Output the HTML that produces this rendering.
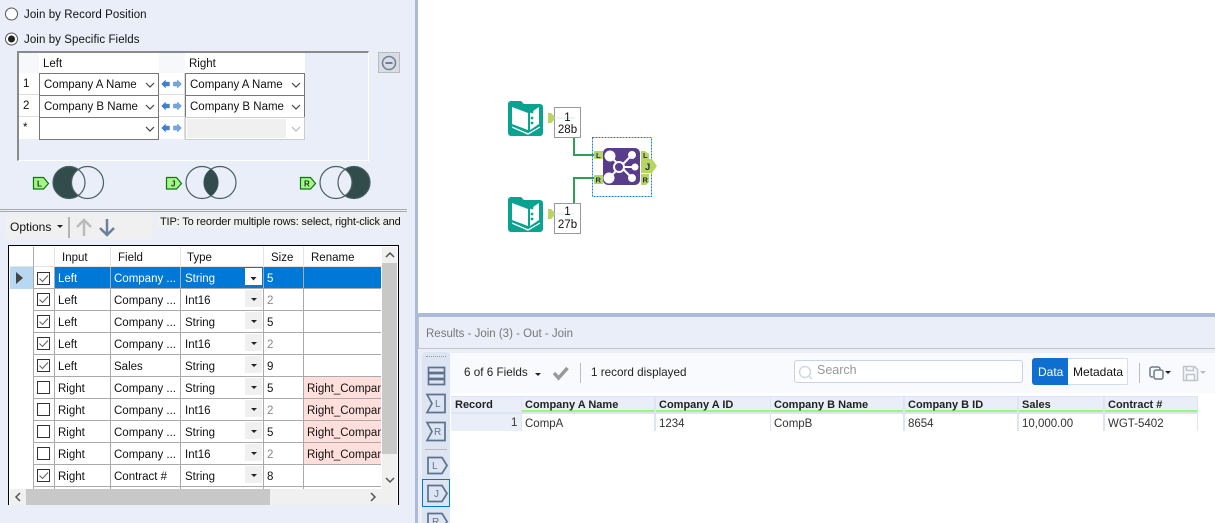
<!DOCTYPE html>
<html><head><meta charset="utf-8"><style>
html,body{margin:0;padding:0;width:1215px;height:523px;overflow:hidden;background:#fff}
body{position:relative;font-family:"Liberation Sans",sans-serif;font-size:11.5px;color:#111}
div,span,svg{position:absolute;box-sizing:border-box}
.t{white-space:nowrap;line-height:14px;margin-top:1px}
.dd{background:#fff;border:1px solid #777;height:23px;width:120px}
.dd .t{left:4px;top:3px}
.g{background:#aaa}
.w{background:#e4e4e4}
.cb{left:37px;width:13px;height:13px;background:#fff;border:1px solid #333}
.ty{left:245px;width:17px;height:17px;background:#f0f0f0}
.ty:after{content:"";position:absolute;left:6px;top:8px;border:3px solid transparent;border-top:3.5px solid #222;border-bottom:0}
.pk{left:304px;width:77px;height:21px;background:#ffdfdc}
.h{top:397px;height:15px;background:#e9eef8;border-bottom:2px solid #9cf57f}
.h .t{left:3px;top:0;font-weight:bold;font-size:11px;color:#222}
.c{top:414px;height:17px;background:#fff}
.c .t{left:3px;top:2px;color:#333;font-size:11.5px}
</style></head><body>

<div style="left:0;top:0;width:415px;height:523px;background:#e9eef8"></div>
<div style="left:415px;top:0;width:3px;height:523px;background:#adbbdb"></div>

<svg style="left:5px;top:7px" width="14" height="40"><circle cx="6.500" cy="7" r="6" fill="#fff" stroke="#555"/><circle cx="6.500" cy="32" r="6" fill="#fff" stroke="#555"/><circle cx="6.500" cy="32" r="3.500" fill="#222"/></svg>
<div class="t" style="left:24px;top:7px;letter-spacing:.08px">Join by Record Position</div>
<div class="t" style="left:24px;top:32px;letter-spacing:.08px">Join by Specific Fields</div>

<div style="left:17px;top:51px;width:352px;height:110px;background:#e9eef8;border:1px solid #fff;border-top:2px solid #8a8a8a;border-left:2px solid #8a8a8a"></div>
<div style="left:19px;top:53px;width:286px;height:86px;background:#fff"></div>
<div style="left:19px;top:53px;width:20px;height:20px;background:#f6f8fc"></div>
<div style="left:159px;top:53px;width:26px;height:20px;background:#f6f8fc"></div>
<div style="left:19px;top:94px;width:21px;height:1px;background:#ddd"></div>
<div style="left:19px;top:116px;width:21px;height:1px;background:#ddd"></div>
<div style="left:158px;top:94px;width:27px;height:1px;background:#ddd"></div>
<div style="left:158px;top:116px;width:27px;height:1px;background:#ddd"></div>
<div style="left:184px;top:73px;width:1px;height:66px;background:#ddd"></div>
<div class="t" style="left:43px;top:56px">Left</div>
<div class="t" style="left:189px;top:56px">Right</div>
<div class="t" style="left:23px;top:76px">1</div>
<div class="t" style="left:23px;top:98px">2</div>
<div class="t" style="left:23px;top:120px">*</div>

<div class="dd" style="left:39px;top:73px"><span class="t">Company A Name</span></div>
<div class="dd" style="left:39px;top:95px"><span class="t">Company B Name</span></div>
<div class="dd" style="left:39px;top:117px"></div>
<div class="dd" style="left:185px;top:73px"><span class="t">Company A Name</span></div>
<div class="dd" style="left:185px;top:95px"><span class="t">Company B Name</span></div>
<div class="dd" style="left:185px;top:117px;border-color:#ccc"></div>
<div style="left:187px;top:119px;width:99px;height:19px;background:#f0f0f0"></div>

<svg style="left:0;top:0" width="320" height="140" fill="none" stroke-width="1.200">
<g stroke="#444"><path d="M146 83l4 4 4-4M146 105l4 4 4-4M146 127l4 4 4-4"/><path d="M292 83l4 4 4-4M292 105l4 4 4-4"/></g>
<path d="M292 127l4 4 4-4" stroke="#bbb"/>
<g fill="#3f7fcc" stroke="#5b8fc9" stroke-width=".5">
<path d="M161.500 84l4-4v2h4v4h-4v2zM161.500 106l4-4v2h4v4h-4v2zM161.500 128l4-4v2h4v4h-4v2z"/></g>
<g fill="#78a6e0" stroke="#5b8fc9" stroke-width=".5">
<path d="M181.500 84l-4-4v2h-4v4h4v2zM181.500 106l-4-4v2h-4v4h4v2zM181.500 128l-4-4v2h-4v4h4v2z"/>
</g></svg>

<div style="left:378px;top:52px;width:22px;height:21px;background:#d9dce3;border:1px solid #bbb"></div>
<svg style="left:381px;top:55px" width="16" height="16"><circle cx="8" cy="8" r="6.500" fill="none" stroke="#6b7f9e" stroke-width="1.500"/><path d="M4.500 8h7" stroke="#6b7f9e" stroke-width="2"/></svg>

<svg style="left:30px;top:164px" width="350" height="38">
<path d="M3.500 13.500h10l5 6-5 5.500h-10z" fill="#a6f58a" stroke="#0a7a0a" stroke-width="1.200"/><text x="7" y="22.500" font-size="8" font-weight="bold" font-family="Liberation Sans" fill="#0b3b0b">L</text>
<path d="M136.500 13.500h10l5 6-5 5.500h-10z" fill="#a6f58a" stroke="#0a7a0a" stroke-width="1.200"/><text x="141" y="22.500" font-size="8" font-weight="bold" font-family="Liberation Sans" fill="#0b3b0b">J</text>
<path d="M270.500 13.500h10l5 6-5 5.500h-10z" fill="#a6f58a" stroke="#0a7a0a" stroke-width="1.200"/><text x="274" y="22.500" font-size="8" font-weight="bold" font-family="Liberation Sans" fill="#0b3b0b">R</text>
<circle cx="39" cy="18.500" r="16" fill="#324c4c"/><circle cx="57.500" cy="18.500" r="16" fill="#e9eef8" stroke="#4a6060" stroke-width="1.200"/><circle cx="39" cy="18.500" r="16" fill="none" stroke="#4a6060" stroke-width="1.200"/>
<circle cx="172" cy="18.500" r="16" fill="none" stroke="#4a6060" stroke-width="1.200"/><circle cx="190" cy="18.500" r="16" fill="none" stroke="#4a6060" stroke-width="1.200"/>
<path d="M181 5.300a16 16 0 0 1 0 26.400a16 16 0 0 1 0-26.400z" fill="#324c4c"/>
<circle cx="324" cy="18.500" r="16" fill="#324c4c"/><circle cx="306" cy="18.500" r="16" fill="#e9eef8" stroke="#4a6060" stroke-width="1.200"/><circle cx="324" cy="18.500" r="16" fill="none" stroke="#4a6060" stroke-width="1.200"/>
</svg>

<div style="left:0;top:209px;width:407px;height:3px;border-top:1px solid #aaa;border-bottom:1px solid #aaa"></div>
<div style="left:5px;top:214px;width:147px;height:25px;background:#f0f0f0"></div>
<div class="t" style="left:10px;top:219px;font-size:12px">Options</div>
<svg style="left:55px;top:215px" width="70" height="24"><path d="M2 10h6l-3 3z" fill="#222"/><path d="M14 2v21" stroke="#777"/><path d="M29 21V6M22 12l7-7 7 7" fill="none" stroke="#bbb" stroke-width="2.500"/><path d="M52 4v15M45 13l7 7 7-7" fill="none" stroke="#6b7f9e" stroke-width="2.500"/></svg>
<div style="left:157px;top:214px;width:243px;height:14px;background:#f0f0f0"></div>
<div class="t" style="left:160px;top:214px;font-size:11px;letter-spacing:-.16px;width:241px;overflow:hidden">TIP: To reorder multiple rows: select, right-click and</div>

<!-- grid -->
<div style="left:8px;top:245px;width:391px;height:260px;background:#fff;border:1px solid #000;border-bottom:0"></div>
<div style="left:10px;top:267px;width:23px;height:22px;background:#b8d8f2"></div>
<div style="left:54px;top:267px;width:327px;height:21px;background:#0078d7"></div>
<div style="left:245px;top:268px;width:17px;height:17px;background:#fff"></div>
<svg style="left:15px;top:272px" width="10" height="12"><path d="M1 0l7 6-7 6z" fill="#444"/></svg>

<div class="t" style="left:62px;top:250px">Input</div><div class="t" style="left:118px;top:250px">Field</div><div class="t" style="left:187px;top:250px">Type</div><div class="t" style="left:271px;top:250px">Size</div><div class="t" style="left:311px;top:250px">Rename</div>

<div class="pk" style="top:377px"></div><div class="pk" style="top:399px"></div><div class="pk" style="top:421px"></div><div class="pk" style="top:443px"></div>

<div class="w" style="left:10px;top:266px;width:372px;height:1px"></div>
<div class="g" style="left:33px;top:288px;width:348px;height:1px"></div>
<div class="g" style="left:33px;top:310px;width:348px;height:1px"></div>
<div class="g" style="left:33px;top:332px;width:348px;height:1px"></div>
<div class="g" style="left:33px;top:354px;width:348px;height:1px"></div>
<div class="g" style="left:33px;top:376px;width:348px;height:1px"></div>
<div class="g" style="left:33px;top:398px;width:348px;height:1px"></div>
<div class="g" style="left:33px;top:420px;width:348px;height:1px"></div>
<div class="g" style="left:33px;top:442px;width:348px;height:1px"></div>
<div class="g" style="left:33px;top:464px;width:348px;height:1px"></div>
<div class="g" style="left:33px;top:486px;width:348px;height:1px"></div>
<div class="g" style="left:33px;top:247px;width:1px;height:242px"></div>
<div class="g" style="left:54px;top:267px;width:1px;height:222px"></div>
<div class="g" style="left:110px;top:267px;width:1px;height:222px"></div>
<div class="g" style="left:180px;top:267px;width:1px;height:222px"></div>
<div class="g" style="left:263px;top:267px;width:1px;height:222px"></div>
<div class="g" style="left:303px;top:267px;width:1px;height:222px"></div>
<div class="w" style="left:54px;top:247px;width:1px;height:19px"></div><div class="w" style="left:110px;top:247px;width:1px;height:19px"></div><div class="w" style="left:180px;top:247px;width:1px;height:19px"></div><div class="w" style="left:263px;top:247px;width:1px;height:19px"></div><div class="w" style="left:303px;top:247px;width:1px;height:19px"></div>

<div class="ty" style="top:290px"></div><div class="ty" style="top:312px"></div><div class="ty" style="top:334px"></div><div class="ty" style="top:356px"></div><div class="ty" style="top:378px"></div><div class="ty" style="top:400px"></div><div class="ty" style="top:422px"></div><div class="ty" style="top:444px"></div><div class="ty" style="top:466px"></div>
<svg style="left:247px;top:270px" width="14" height="14"><path d="M3.500 7h6L6.500 10.500z" fill="#222"/></svg>

<div class="cb" style="top:272px"></div><div class="cb" style="top:293px"></div><div class="cb" style="top:315px"></div><div class="cb" style="top:337px"></div><div class="cb" style="top:359px"></div><div class="cb" style="top:381px"></div><div class="cb" style="top:403px"></div><div class="cb" style="top:425px"></div><div class="cb" style="top:447px"></div><div class="cb" style="top:469px"></div>
<svg style="left:37px;top:271px" width="14" height="212" fill="none" stroke="#666" stroke-width="1.100"><path d="M2.500 7.500l3 3 5.500-6M2.500 28.500l3 3 5.500-6M2.500 50.500l3 3 5.500-6M2.500 72.500l3 3 5.500-6M2.500 94.500l3 3 5.500-6M2.500 204.500l3 3 5.500-6"/></svg>

<div class="t" style="left:58px;top:271px;color:#fff">Left</div><div class="t" style="left:114px;top:271px;color:#fff">Company ...</div><div class="t" style="left:185px;top:271px;color:#fff">String</div><div class="t" style="left:267px;top:271px;color:#fff">5</div>
<div class="t" style="left:58px;top:293px">Left</div><div class="t" style="left:114px;top:293px">Company ...</div><div class="t" style="left:185px;top:293px">Int16</div><div class="t" style="left:267px;top:293px;color:#888">2</div>
<div class="t" style="left:58px;top:315px">Left</div><div class="t" style="left:114px;top:315px">Company ...</div><div class="t" style="left:185px;top:315px">String</div><div class="t" style="left:267px;top:315px">5</div>
<div class="t" style="left:58px;top:337px">Left</div><div class="t" style="left:114px;top:337px">Company ...</div><div class="t" style="left:185px;top:337px">Int16</div><div class="t" style="left:267px;top:337px;color:#888">2</div>
<div class="t" style="left:58px;top:359px">Left</div><div class="t" style="left:114px;top:359px">Sales</div><div class="t" style="left:185px;top:359px">String</div><div class="t" style="left:267px;top:359px">9</div>
<div class="t" style="left:58px;top:381px">Right</div><div class="t" style="left:114px;top:381px">Company ...</div><div class="t" style="left:185px;top:381px">String</div><div class="t" style="left:267px;top:381px">5</div>
<div class="t" style="left:58px;top:403px">Right</div><div class="t" style="left:114px;top:403px">Company ...</div><div class="t" style="left:185px;top:403px">Int16</div><div class="t" style="left:267px;top:403px;color:#888">2</div>
<div class="t" style="left:58px;top:425px">Right</div><div class="t" style="left:114px;top:425px">Company ...</div><div class="t" style="left:185px;top:425px">String</div><div class="t" style="left:267px;top:425px">5</div>
<div class="t" style="left:58px;top:447px">Right</div><div class="t" style="left:114px;top:447px">Company ...</div><div class="t" style="left:185px;top:447px">Int16</div><div class="t" style="left:267px;top:447px;color:#888">2</div>
<div class="t" style="left:58px;top:469px">Right</div><div class="t" style="left:114px;top:469px">Contract #</div><div class="t" style="left:185px;top:469px">String</div><div class="t" style="left:267px;top:469px">8</div>
<div class="t" style="left:307px;top:381px;width:74px;overflow:hidden">Right_Company</div><div class="t" style="left:307px;top:403px;width:74px;overflow:hidden">Right_Company</div><div class="t" style="left:307px;top:425px;width:74px;overflow:hidden">Right_Company</div><div class="t" style="left:307px;top:447px;width:74px;overflow:hidden">Right_Company</div>

<div style="left:382px;top:247px;width:15px;height:242px;background:#f0f0f0"></div>
<div style="left:382px;top:263px;width:15px;height:191px;background:#c8c8c8"></div>
<div style="left:10px;top:489px;width:387px;height:16px;background:#f0f0f0"></div>
<div style="left:26px;top:489px;width:244px;height:16px;background:#c8c8c8"></div>
<svg style="left:10px;top:247px" width="388" height="258" fill="none" stroke="#555" stroke-width="1.500"><path d="M376 10l4-4 4 4M376 231l4 4 4-4M10 246l-4 4 4 4M361 246l4 4-4 4"/></svg>

<!-- canvas -->
<svg style="left:495px;top:90px" width="175" height="150">
<g fill="#0aa290">
<path d="M13 14a3 3 0 0 1 3-3h10l3 3h16a3 3 0 0 1 3 3v26a3 3 0 0 1-3 3H16a3 3 0 0 1-3-3z"/>
<path d="M13 110a3 3 0 0 1 3-3h10l3 3h16a3 3 0 0 1 3 3v26a3 3 0 0 1-3 3H16a3 3 0 0 1-3-3z"/></g>
<g fill="#fff"><path d="M17 17l16 6v17l-16-6zM35 23l9-6v17l-9 6z"/><path d="M17 113l16 6v17l-16-6zM35 119l9-6v17l-9 6z"/></g>
<g fill="#0aa290"><circle cx="37" cy="22" r="1.400"/><circle cx="37" cy="28" r="1.400"/><circle cx="37" cy="33" r="1.400"/><circle cx="37" cy="118" r="1.400"/><circle cx="37" cy="124" r="1.400"/><circle cx="37" cy="129" r="1.400"/></g>
<path d="M17 37l16 7 12-7M17 133l16 7 12-7" fill="none" stroke="#fff" stroke-width="1.300"/>
<path d="M53 23h3l3 3v4l-3 3h-3zM53 119h3l3 3v4l-3 3h-3z" fill="#b7d562"/>
<rect x="59.500" y="17.500" width="26" height="30" fill="#fff" stroke="#999"/>
<rect x="59.500" y="113.500" width="26" height="30" fill="#fff" stroke="#999"/>
<path d="M59 28h20v-1M59 124h20" stroke="#d7efe8" fill="none"/>
<text x="72.500" y="31" font-size="11.500" text-anchor="middle" font-family="Liberation Sans" fill="#111">1</text>
<text x="72.500" y="43" font-size="11.500" text-anchor="middle" font-family="Liberation Sans" fill="#111">28b</text>
<text x="72.500" y="125" font-size="11.500" text-anchor="middle" font-family="Liberation Sans" fill="#111">1</text>
<text x="72.500" y="138" font-size="11.500" text-anchor="middle" font-family="Liberation Sans" fill="#111">27b</text>
<path d="M79 48v17h20M79 113V88h20" fill="none" stroke="#2f9e58" stroke-width="2"/>
<rect x="97.500" y="47.500" width="59" height="59" fill="none" stroke="#1c7cd6" stroke-dasharray="2 1"/>
<rect x="108" y="58" width="37" height="37" rx="5" fill="#5a3d8a"/>
<g stroke="#fff" stroke-width="2" fill="#fff"><path d="M115 66l22 22M137 65l-23 23M124 77h16"/><circle cx="115" cy="66" r="4.500"/><circle cx="137" cy="65" r="3"/><circle cx="140" cy="77" r="2.500"/><circle cx="114" cy="88" r="4.500"/><circle cx="137" cy="88" r="3"/><circle cx="124" cy="77" r="5" fill="#5a3d8a"/></g>
<path d="M99 61h9v8h-9zM99 85h9v9h-9zM146 61h4l4 3v5h-8zM146 84h8v8l-3 3h-5z" fill="#b7d562"/>
<path d="M146 69h11l5 7-5 7h-11z" fill="#b7d562"/>
<g font-family="Liberation Sans" font-weight="bold" font-size="7.500" fill="#234"><text x="101" y="68">L</text><text x="100.500" y="92.500">R</text><text x="148" y="68">L</text><text x="147.500" y="92.500">R</text><text x="150" y="80" font-size="9.500">J</text></g>
</svg>

<!-- results -->
<div style="left:418px;top:313px;width:797px;height:4px;background:#adbbdb"></div>
<div style="left:418px;top:317px;width:797px;height:32px;background:#e9eef8;border-bottom:1px solid #c4c4c4"></div>
<div style="left:418px;top:349px;width:797px;height:174px;background:#e9eef8"></div>
<div style="left:418px;top:317px;width:1px;height:32px;background:#c4c4c4"></div>
<div class="t" style="left:426px;top:326px;color:#777;font-size:11.500px">Results - Join (3) - Out - Join</div>
<div style="left:450px;top:353px;width:765px;height:170px;background:#fff"></div>
<div style="left:450px;top:353px;width:765px;height:40px;background:#f8fafd"></div>
<div style="left:422px;top:352px;width:28px;height:171px;background:#dde5f2;border-radius:4px 4px 0 0"></div>
<div style="left:426px;top:356px;width:20px;height:1px;border-top:1px dotted #999"></div>
<svg style="left:422px;top:360px" width="28" height="163" fill="none" stroke="#5d7290" stroke-width="1.700">
<path d="M6.500 7.500h16v5h-16zM6.500 13.500h16v5h-16zM6.500 19.500h16v5h-16z"/>
<path d="M5 34.500h18v18H5l5-9zM5 62.500h18v18H5l5-9z"/>
<path d="M6 97.500h14l5 8-5 8H6zM6 125.500h14l5 8-5 8H6zM6 153.500h14l5 8-5 8H6z"/>
<path d="M3 89.500h22" stroke="#bbb" stroke-width="1"/>
<g fill="#5d7290" stroke="none" font-family="Liberation Sans" font-size="10"><text x="13" y="47">L</text><text x="12" y="75">R</text><text x="10" y="109">L</text><text x="12" y="137">J</text><text x="10" y="165">R</text></g>
</svg>
<div style="left:422px;top:479px;width:28px;height:28px;border:1px solid #0078d7"></div>

<div class="t" style="left:464px;top:365px;font-size:11.700px;color:#222">6 of 6 Fields</div>
<svg style="left:530px;top:362px" width="60" height="24"><path d="M5 11h6l-3 3z" fill="#222"/><path d="M24 11l4.500 5 9-10" fill="none" stroke="#999" stroke-width="3.500"/><path d="M50.500 1v20" stroke="#bbb"/></svg>
<div class="t" style="left:591px;top:365px;font-size:11.700px;color:#222">1 record displayed</div>

<div style="left:794px;top:360px;width:229px;height:23px;background:#fff;border:1px solid #c6d2e6;border-radius:3px"></div>
<svg style="left:797px;top:364px" width="18" height="18" fill="none" stroke="#cfd8e6" stroke-width="1.500"><circle cx="8" cy="8" r="5.500"/><path d="M12 12l3 3"/></svg>
<div class="t" style="left:817px;top:362px;color:#999;font-size:12.500px">Search</div>
<div style="left:1032px;top:358px;width:36px;height:27px;background:#0f6fcf;border-radius:3px 0 0 3px"></div>
<div class="t" style="left:1038px;top:364px;color:#fff;font-size:12px">Data</div>
<div style="left:1068px;top:358px;width:60px;height:27px;background:#fff;border:1px solid #d5deec;border-left:0"></div>
<div class="t" style="left:1073px;top:364px;font-size:12px;color:#111">Metadata</div>
<svg style="left:1135px;top:360px" width="80" height="26" fill="none" stroke="#6e7b8c" stroke-width="1.500"><path d="M4.500 3v20" stroke="#bbb" stroke-width="1"/><path d="M18 17h-1a2 2 0 0 1-2-2V9a2 2 0 0 1 2-2h6a2 2 0 0 1 2 2v1"/><rect x="19" y="10" width="9" height="9" rx="2"/><path d="M30 11h6l-3 3z" fill="#222" stroke="none"/><path d="M48.500 6.500h11l3 3v11h-14zM51.500 6.500v4h7v-4M51.500 20.500v-6h8v6" stroke="#c0c5cc"/><path d="M65 11h6l-3 3z" fill="#bbb" stroke="none"/></svg>

<div style="left:451px;top:396px;width:747px;height:35px;background:#dde5f2"></div>
<div style="left:451px;top:397px;width:70px;height:15px;background:#e9eef8"></div>
<div class="t" style="left:455px;top:397px;font-weight:bold;font-size:11px;color:#222">Record</div>
<div style="left:451px;top:414px;width:70px;height:17px;background:#e9eef8"></div>
<div class="t" style="left:511px;top:415px;color:#333">1</div>
<div class="h" style="left:522px;width:132px"><span class="t">Company A Name</span></div>
<div class="h" style="left:656px;width:114px"><span class="t">Company A ID</span></div>
<div class="h" style="left:771px;width:132px"><span class="t">Company B Name</span></div>
<div class="h" style="left:905px;width:112px"><span class="t">Company B ID</span></div>
<div class="h" style="left:1019px;width:84px"><span class="t">Sales</span></div>
<div class="h" style="left:1105px;width:92px"><span class="t">Contract #</span></div>
<div class="c" style="left:522px;width:132px"><span class="t">CompA</span></div>
<div class="c" style="left:656px;width:114px"><span class="t">1234</span></div>
<div class="c" style="left:771px;width:132px"><span class="t">CompB</span></div>
<div class="c" style="left:905px;width:112px"><span class="t">8654</span></div>
<div class="c" style="left:1019px;width:84px"><span class="t">10,000.00</span></div>
<div class="c" style="left:1105px;width:92px"><span class="t">WGT-5402</span></div>
</body></html>
